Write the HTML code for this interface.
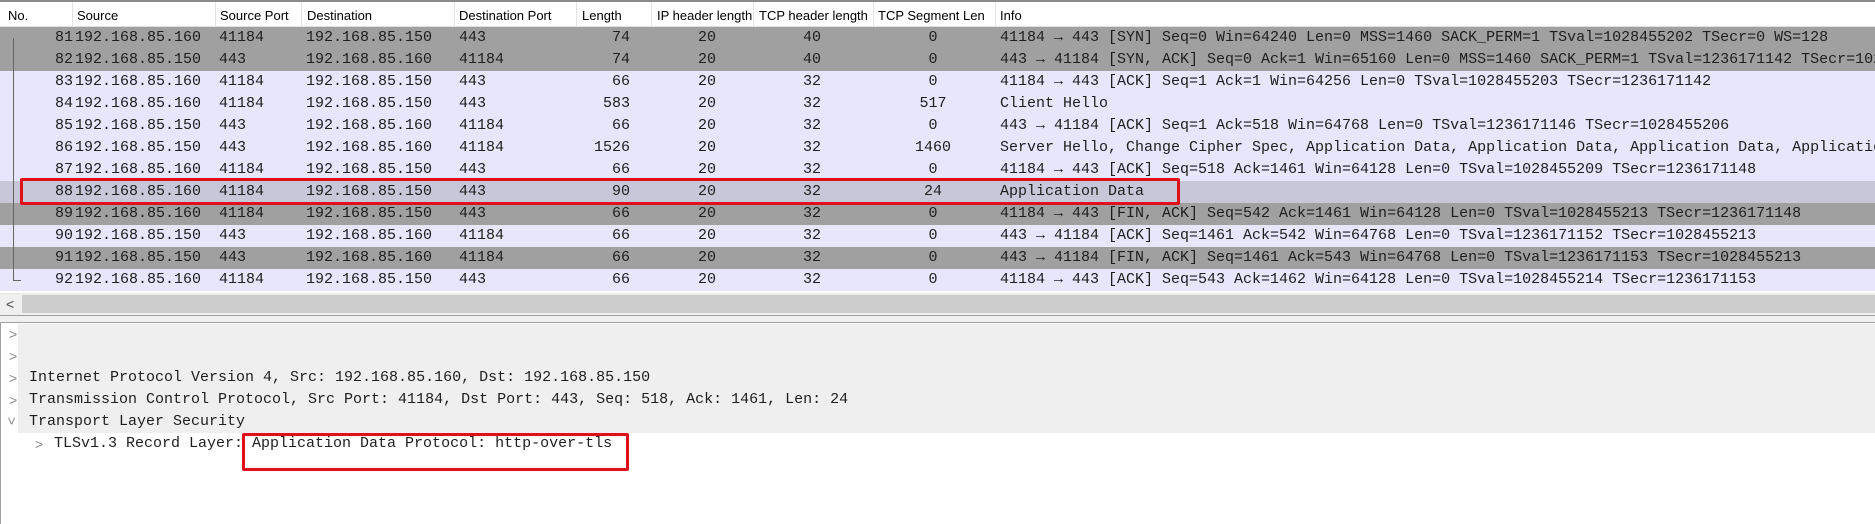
<!DOCTYPE html>
<html><head><meta charset="utf-8"><style>
*{margin:0;padding:0;box-sizing:border-box}
body{width:1875px;height:524px;overflow:hidden;background:#fff;position:relative;font-family:"Liberation Mono",monospace;color:#1e1e1e}
.hdr{position:absolute;left:0;top:0;width:1875px;height:27px;border-top:2px solid #8a8a8a;border-bottom:1px solid #e0e0e0;font-family:"Liberation Sans",sans-serif;font-size:13px;color:#000}
.hdr span{position:absolute;top:6px}
.hdr i{position:absolute;top:0;width:1px;height:26px;background:#e3e3e3}
.r{position:absolute;left:0;width:1875px;height:22px;font-size:15px;line-height:22px;white-space:nowrap}
.g{background:#a0a0a0}.l{background:#e7e6fc}.s{background:#c7c7d9}
.r span{position:absolute;top:0}
.n{left:0;width:73px;text-align:right}
.a{left:75px}.b{left:219px}.c{left:306px}.d{left:459px}
.e{left:560px;width:70px;text-align:right}
.f{left:670px;width:74px;text-align:center}
.h{left:775px;width:74px;text-align:center}
.k{left:886px;width:94px;text-align:center}
.m{left:1000px}
.tree{position:absolute;left:13px;top:38px;width:8px;height:242px;border-left:1px solid #666}
.box{position:absolute;border:3px solid #e0101a;border-radius:2px}
.det{position:absolute;font-size:15px;line-height:22px;white-space:nowrap}
.chev{position:absolute;font-family:"Liberation Sans",sans-serif;font-size:14px;color:#888}
</style></head><body>
<div class="hdr">
<span style="left:8px">No.</span><i style="left:72px"></i>
<span style="left:77px">Source</span><i style="left:215px"></i>
<span style="left:220px">Source Port</span><i style="left:301px"></i>
<span style="left:307px">Destination</span><i style="left:454px"></i>
<span style="left:459px">Destination Port</span><i style="left:576px"></i>
<span style="left:582px">Length</span><i style="left:651px"></i>
<span style="left:657px">IP header length</span><i style="left:753px"></i>
<span style="left:759px">TCP header length</span><i style="left:873px"></i>
<span style="left:878px">TCP Segment Len</span><i style="left:995px"></i>
<span style="left:1000px">Info</span>
</div>

<div class="r g" style="top:27px"><span class="n">81</span><span class="a">192.168.85.160</span><span class="b">41184</span><span class="c">192.168.85.150</span><span class="d">443</span><span class="e">74</span><span class="f">20</span><span class="h">40</span><span class="k">0</span><span class="m">41184 → 443 [SYN] Seq=0 Win=64240 Len=0 MSS=1460 SACK_PERM=1 TSval=1028455202 TSecr=0 WS=128</span></div>
<div class="r g" style="top:49px"><span class="n">82</span><span class="a">192.168.85.150</span><span class="b">443</span><span class="c">192.168.85.160</span><span class="d">41184</span><span class="e">74</span><span class="f">20</span><span class="h">40</span><span class="k">0</span><span class="m">443 → 41184 [SYN, ACK] Seq=0 Ack=1 Win=65160 Len=0 MSS=1460 SACK_PERM=1 TSval=1236171142 TSecr=1028455202</span></div>
<div class="r l" style="top:71px"><span class="n">83</span><span class="a">192.168.85.160</span><span class="b">41184</span><span class="c">192.168.85.150</span><span class="d">443</span><span class="e">66</span><span class="f">20</span><span class="h">32</span><span class="k">0</span><span class="m">41184 → 443 [ACK] Seq=1 Ack=1 Win=64256 Len=0 TSval=1028455203 TSecr=1236171142</span></div>
<div class="r l" style="top:93px"><span class="n">84</span><span class="a">192.168.85.160</span><span class="b">41184</span><span class="c">192.168.85.150</span><span class="d">443</span><span class="e">583</span><span class="f">20</span><span class="h">32</span><span class="k">517</span><span class="m">Client Hello</span></div>
<div class="r l" style="top:115px"><span class="n">85</span><span class="a">192.168.85.150</span><span class="b">443</span><span class="c">192.168.85.160</span><span class="d">41184</span><span class="e">66</span><span class="f">20</span><span class="h">32</span><span class="k">0</span><span class="m">443 → 41184 [ACK] Seq=1 Ack=518 Win=64768 Len=0 TSval=1236171146 TSecr=1028455206</span></div>
<div class="r l" style="top:137px"><span class="n">86</span><span class="a">192.168.85.150</span><span class="b">443</span><span class="c">192.168.85.160</span><span class="d">41184</span><span class="e">1526</span><span class="f">20</span><span class="h">32</span><span class="k">1460</span><span class="m">Server Hello, Change Cipher Spec, Application Data, Application Data, Application Data, Application Data</span></div>
<div class="r l" style="top:159px"><span class="n">87</span><span class="a">192.168.85.160</span><span class="b">41184</span><span class="c">192.168.85.150</span><span class="d">443</span><span class="e">66</span><span class="f">20</span><span class="h">32</span><span class="k">0</span><span class="m">41184 → 443 [ACK] Seq=518 Ack=1461 Win=64128 Len=0 TSval=1028455209 TSecr=1236171148</span></div>
<div class="r s" style="top:181px"><span class="n">88</span><span class="a">192.168.85.160</span><span class="b">41184</span><span class="c">192.168.85.150</span><span class="d">443</span><span class="e">90</span><span class="f">20</span><span class="h">32</span><span class="k">24</span><span class="m">Application Data</span></div>
<div class="r g" style="top:203px"><span class="n">89</span><span class="a">192.168.85.160</span><span class="b">41184</span><span class="c">192.168.85.150</span><span class="d">443</span><span class="e">66</span><span class="f">20</span><span class="h">32</span><span class="k">0</span><span class="m">41184 → 443 [FIN, ACK] Seq=542 Ack=1461 Win=64128 Len=0 TSval=1028455213 TSecr=1236171148</span></div>
<div class="r l" style="top:225px"><span class="n">90</span><span class="a">192.168.85.150</span><span class="b">443</span><span class="c">192.168.85.160</span><span class="d">41184</span><span class="e">66</span><span class="f">20</span><span class="h">32</span><span class="k">0</span><span class="m">443 → 41184 [ACK] Seq=1461 Ack=542 Win=64768 Len=0 TSval=1236171152 TSecr=1028455213</span></div>
<div class="r g" style="top:247px"><span class="n">91</span><span class="a">192.168.85.150</span><span class="b">443</span><span class="c">192.168.85.160</span><span class="d">41184</span><span class="e">66</span><span class="f">20</span><span class="h">32</span><span class="k">0</span><span class="m">443 → 41184 [FIN, ACK] Seq=1461 Ack=543 Win=64768 Len=0 TSval=1236171153 TSecr=1028455213</span></div>
<div class="r l" style="top:269px"><span class="n">92</span><span class="a">192.168.85.160</span><span class="b">41184</span><span class="c">192.168.85.150</span><span class="d">443</span><span class="e">66</span><span class="f">20</span><span class="h">32</span><span class="k">0</span><span class="m">41184 → 443 [ACK] Seq=543 Ack=1462 Win=64128 Len=0 TSval=1028455214 TSecr=1236171153</span></div>
<div class="tree"></div>
<div style="position:absolute;left:13px;top:280px;width:8px;height:1px;background:#666"></div>
<div class="box" style="left:20px;top:178px;width:1160px;height:27px"></div>

<div style="position:absolute;left:0;top:293px;width:1875px;height:22px;background:#f0f0f0;border-top:1px solid #e8e8e8"></div>
<div style="position:absolute;left:22px;top:295px;width:1853px;height:18px;background:#cdcdcd"></div>
<div class="chev" style="left:6px;top:296px;color:#444">&lt;</div>
<div style="position:absolute;left:0;top:315px;width:1875px;height:8px;background:#f0f0f0;border-top:1px solid #a0a0a0;border-bottom:1px solid #a0a0a0"></div>
<div style="position:absolute;left:0;top:323px;width:1px;height:201px;background:#a0a0a0"></div>

<div style="position:absolute;left:18px;top:324px;width:1857px;height:109px;background:#efefef"></div>
<div class="chev" style="left:9px;top:326px">&gt;</div>
<div class="chev" style="left:9px;top:348px">&gt;</div>
<div class="chev" style="left:9px;top:370px">&gt;</div>
<div class="chev" style="left:9px;top:392px">&gt;</div>
<div class="chev" style="left:8px;top:413px;transform:rotate(90deg)">&gt;</div>
<div class="chev" style="left:35px;top:436px">&gt;</div>
<div class="det" style="left:29px;top:367px">Internet Protocol Version 4, Src: 192.168.85.160, Dst: 192.168.85.150</div>
<div class="det" style="left:29px;top:389px">Transmission Control Protocol, Src Port: 41184, Dst Port: 443, Seq: 518, Ack: 1461, Len: 24</div>
<div class="det" style="left:29px;top:411px">Transport Layer Security</div>
<div class="det" style="left:54px;top:433px">TLSv1.3 Record Layer: Application Data Protocol: http-over-tls</div>
<div class="box" style="left:242px;top:433px;width:387px;height:38px"></div>
</body></html>
